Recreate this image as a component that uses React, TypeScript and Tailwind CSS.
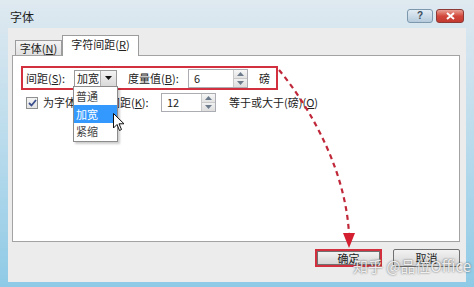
import React from "react";

function Spin({ value, width }: { value: string; width: string }) {
  return (
    <div className={`flex h-[19px] border border-[#abadb3] bg-white ${width}`}>
      <span className="flex-1 pl-[5px] leading-[17px] text-[11px] text-[#222]">{value}</span>
      <div className="flex flex-col w-[14px] border-l border-[#c9c9c9]">
        <div className="flex-1 flex items-center justify-center bg-gradient-to-b from-[#f7f7f7] to-[#e3e3e3] border-b border-[#c9c9c9]">
          <svg width="7" height="4" viewBox="0 0 7 4">
            <path d="M0 4 L3.5 0 L7 4 Z" fill="#6b7b8c" />
          </svg>
        </div>
        <div className="flex-1 flex items-center justify-center bg-gradient-to-b from-[#f1f1f1] to-[#dedede]">
          <svg width="7" height="4" viewBox="0 0 7 4">
            <path d="M0 0 L3.5 4 L7 0 Z" fill="#6b7b8c" />
          </svg>
        </div>
      </div>
    </div>
  );
}

function Hot({ k }: { k: string }) {
  return (
    <>
      (<span className="underline">{k}</span>)
    </>
  );
}

export default function App() {
  return (
    <div className="relative w-[474px] h-[287px] overflow-hidden bg-gradient-to-b from-[#dfe9f0] via-[#b9dbec] to-[#8ecae6] font-['Noto_Sans_CJK_SC',sans-serif] text-[#222]">
      <div className="flex flex-col h-full">
        {/* title bar */}
        <div className="h-[28px] flex items-start justify-between pl-[10px] pr-[10px] pt-[9px]">
          <span className="text-[12px] leading-[16px] text-[#1e1e1e]">字体</span>
          <div className="flex gap-[3px]">
            <div className="w-[26px] h-[14px] rounded-[3px] border border-[#7d97ad] bg-gradient-to-b from-[#e2ecf4] to-[#b6cbdc] flex items-center justify-center text-[10px] leading-none text-[#3a4a5a] font-bold font-['Liberation_Sans',sans-serif]">
              ?
            </div>
            <div className="w-[28px] h-[14px] rounded-[3px] border border-[#8d3a36] bg-gradient-to-b from-[#e8a096] via-[#d2473c] to-[#c23a30] flex items-center justify-center">
              <svg width="9" height="8" viewBox="0 0 9 8">
                <path d="M1 1 L8 7 M8 1 L1 7" stroke="#fff" strokeWidth="2" />
              </svg>
            </div>
          </div>
        </div>

        {/* dialog body */}
        <div className="flex-1 ml-[8px] mr-[8px] mb-[5px] bg-[#ececec] flex flex-col pl-[4px] pr-[6px]">
          {/* tabs */}
          <div className="flex items-end h-[28px] pt-[7px] -mb-px relative z-10">
            <div className="ml-[3px] w-[47px] h-[15px] border border-b-0 border-[#9c9c9c] bg-gradient-to-b from-[#f4f4f4] to-[#e0e0e0] flex items-center justify-center text-[11px] leading-none mb-px">
              字体<Hot k="N" />
            </div>
            <div className="w-[77px] h-[21px] border border-b-0 border-[#9c9c9c] bg-white flex items-center justify-center text-[11px] leading-none pb-[3px]">
              字符间距<Hot k="R" />
            </div>
          </div>

          {/* tab panel */}
          <div className="relative h-[187px] bg-white border border-[#a3a3a3] pt-[10px] pl-[8px]">
            <div className="w-[257px] h-[24px] border-2 border-[#d2303f] flex items-center pl-[3px] text-[11px]">
              <span className="w-[48px]">
                间距<Hot k="S" />:
              </span>
              <div className="flex w-[43px] h-[17px] border border-[#9a9a9a] bg-white">
                <span className="flex-1 pl-[2px] leading-[15px]">加宽</span>
                <div className="w-[16px] border-l border-[#b0b0b0] bg-gradient-to-b from-[#f3f3f3] to-[#d9d9d9] flex items-center justify-center">
                  <svg width="7" height="4" viewBox="0 0 7 4">
                    <path d="M0 0 L3.5 4 L7 0 Z" fill="#111" />
                  </svg>
                </div>
              </div>
              <span className="ml-[11px] w-[60px]">
                度量值<Hot k="B" />:
              </span>
              <Spin value="6" width="w-[60px]" />
              <span className="ml-[11px]">磅</span>
            </div>

            <div className="flex items-center mt-[3px] pl-[5px] text-[11px]">
              <div className="w-[12px] h-[12px] border border-[#8e8f8f] bg-gradient-to-b from-[#f4f4f4] to-[#e4e4e4] flex items-center justify-center">
                <svg width="9" height="8" viewBox="0 0 9 8">
                  <path d="M1 4 L3.5 6.5 L8 1" stroke="#3b4f8c" strokeWidth="1.8" fill="none" />
                </svg>
              </div>
              <span className="ml-[5px] w-[118px] whitespace-nowrap">
                为字体调整字间距<Hot k="K" />:
              </span>
              <Spin value="12" width="w-[55px]" />
              <span className="ml-[13px] whitespace-nowrap">
                等于或大于(磅)<Hot k="O" />
              </span>
            </div>

            {/* open dropdown list */}
            <div className="absolute left-[60px] top-[30px] w-[45px] h-[56px] border border-[#8c8c8c] bg-white shadow-[2px_2px_2px_rgba(0,0,0,0.2)] flex flex-col text-[11px] pt-px">
              <div className="h-[17px] pl-[2px] leading-[17px] text-[#444]">普通</div>
              <div className="h-[18px] pl-[2px] leading-[18px] bg-[#3399ff] text-white">加宽</div>
              <div className="h-[17px] pl-[2px] leading-[17px] text-[#444]">紧缩</div>
            </div>

            {/* mouse pointer */}
            <svg className="absolute left-[100px] top-[57px]" width="12" height="19" viewBox="0 0 12 19">
              <path
                d="M0.5 0.5 L0.5 15 L4 11.5 L6.5 17.5 L8.5 16.5 L6 10.8 L11 10.8 Z"
                fill="#fff"
                stroke="#111"
                strokeWidth="1"
                strokeLinejoin="round"
              />
            </svg>
          </div>

          {/* buttons */}
          <div className="flex justify-end gap-[11px] pt-[7px]">
            <div className="w-[67px] h-[18px] border-2 border-[#d2303f] flex">
              <div className="flex-1 border border-[#707070] bg-gradient-to-b from-[#f2f2f2] to-[#d6d6d6] flex items-center justify-center text-[11px] leading-none">
                确定
              </div>
            </div>
            <div className="w-[67px] h-[18px] border border-[#707070] rounded-[2px] bg-gradient-to-b from-[#f2f2f2] to-[#d6d6d6] flex items-center justify-center text-[11px] leading-none">
              取消
            </div>
          </div>
        </div>
      </div>

      {/* annotation: dashed arrow */}
      <svg className="absolute left-0 top-0 pointer-events-none" width="474" height="287" viewBox="0 0 474 287">
        <path
          d="M279 70 C300 95 345 160 349 234"
          stroke="#c0283a"
          strokeWidth="2.2"
          strokeDasharray="5 4"
          fill="none"
        />
        <path d="M343 233 L355 233 L349 248 Z" fill="#d41f30" />
      </svg>

      {/* watermark */}
      <span className="absolute left-[353px] top-[257px] text-[15px] leading-[18px] text-white/85 whitespace-nowrap [text-shadow:0_0_2px_rgba(60,60,60,0.9)]">
        知乎 @品位Office
      </span>
    </div>
  );
}
